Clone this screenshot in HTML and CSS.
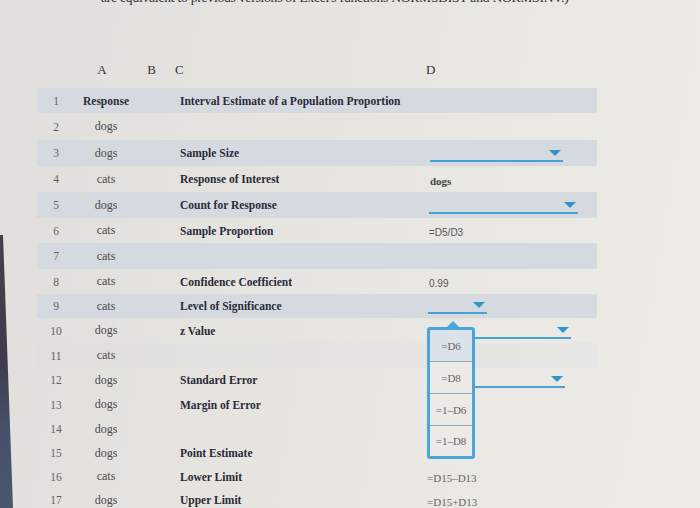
FILE: index.html
```html
<!DOCTYPE html>
<html>
<head>
<meta charset="utf-8">
<link rel="stylesheet" href="styles.css">
</head>
<body>
<div class="page">
  <div class="note">are equivalent to previous versions of Excel's functions NORMSDIST and NORMSINV.)</div>
  <div class="colheads">
    <span></span><span class="ch-a">A</span><span class="ch-b">B</span><span class="ch-c">C</span><span class="ch-d">D</span>
  </div>
  <div class="sheet">
    <div class="row band"><span class="num">1</span><span class="a bold">Response</span><span></span><span class="c">Interval Estimate of a Population Proportion</span><span class="d"></span></div>
    <div class="row"><span class="num">2</span><span class="a">dogs</span><span></span><span class="c"></span><span class="d"></span></div>
    <div class="row band"><span class="num">3</span><span class="a">dogs</span><span></span><span class="c">Sample Size</span><span class="d"><span class="dd w133"></span></span></div>
    <div class="row"><span class="num">4</span><span class="a">cats</span><span></span><span class="c">Response of Interest</span><span class="d"><span class="val bold">dogs</span></span></div>
    <div class="row band"><span class="num">5</span><span class="a">dogs</span><span></span><span class="c">Count for Response</span><span class="d"><span class="dd w149"></span></span></div>
    <div class="row"><span class="num">6</span><span class="a">cats</span><span></span><span class="c">Sample Proportion</span><span class="d"><span class="val sans">=D5/D3</span></span></div>
    <div class="row band"><span class="num">7</span><span class="a">cats</span><span></span><span class="c"></span><span class="d"></span></div>
    <div class="row"><span class="num">8</span><span class="a">cats</span><span></span><span class="c">Confidence Coefficient</span><span class="d"><span class="val sans">0.99</span></span></div>
    <div class="row band"><span class="num">9</span><span class="a">cats</span><span></span><span class="c">Level of Significance</span><span class="d open"><span class="dd w59"></span>
      <div class="list">
        <div class="opt sel">=D6</div>
        <div class="opt">=D8</div>
        <div class="opt">=1–D6</div>
        <div class="opt last">=1–D8</div>
      </div>
    </span></div>
    <div class="row"><span class="num">10</span><span class="a">dogs</span><span></span><span class="c">z Value</span><span class="d"><span class="dd w143"></span></span></div>
    <div class="row faint"><span class="num">11</span><span class="a">cats</span><span></span><span class="c"></span><span class="d"></span></div>
    <div class="row"><span class="num">12</span><span class="a">dogs</span><span></span><span class="c">Standard Error</span><span class="d"><span class="dd w137"></span></span></div>
    <div class="row"><span class="num">13</span><span class="a">dogs</span><span></span><span class="c">Margin of Error</span><span class="d"></span></div>
    <div class="row"><span class="num">14</span><span class="a">dogs</span><span></span><span class="c"></span><span class="d"></span></div>
    <div class="row"><span class="num">15</span><span class="a">dogs</span><span></span><span class="c">Point Estimate</span><span class="d"></span></div>
    <div class="row"><span class="num">16</span><span class="a">cats</span><span></span><span class="c">Lower Limit</span><span class="d"><span class="val formula">=D15–D13</span></span></div>
    <div class="row"><span class="num">17</span><span class="a">dogs</span><span></span><span class="c">Upper Limit</span><span class="d"><span class="val formula">=D15+D13</span></span></div>
  </div>
</div>
<div class="bezel"></div>
</body>
</html>
```

FILE: styles.css
```css
html, body {
  margin: 0;
  padding: 0;
}
body {
  width: 700px;
  height: 508px;
  overflow: hidden;
  position: relative;
  background: linear-gradient(100deg, #e1dfdb 0%, #e7e5e0 45%, #edece6 100%);
  font-family: "Liberation Serif", "DejaVu Serif", serif;
  color: #333;
}
.page {
  padding-left: 37px;
}
.note {
  font-size: 13.5px;
  line-height: 16px;
  height: 16px;
  margin-top: -10px;
  padding-left: 64px;
  color: #2e2e33;
  white-space: nowrap;
  letter-spacing: -0.2px;
}
.colheads {
  margin-top: 56px;
  height: 15px;
  display: grid;
  grid-template-columns: 36px 64px 33px 254px 173px;
  font-size: 13px;
  line-height: 15px;
  color: #333;
}
.ch-a { text-align: center; padding-right: 6px; }
.ch-b { text-align: center; padding-right: 4px; }
.ch-c { padding-left: 5px; }
.ch-d { padding-left: 2px; }

.sheet {
  margin-top: 11px;
  width: 560px;
  display: grid;
  grid-template-rows: 25px 27px 26px 26px 26px 25px 26px 25px 24px 25px 25px 24px 25px 24px 24px 23px 24px;
}
.row {
  display: grid;
  grid-template-columns: 36px 64px 33px 254px 173px;
  align-items: center;
}
.band {
  background: #d5dae1;
}
.faint {
  background: rgba(213, 218, 225, 0.18);
}
.num {
  text-align: center;
  padding-left: 2px;
  font-size: 11.5px;
  color: #626262;
}
.a {
  text-align: center;
  font-size: 12px;
  color: #4a4a4a;
  padding-left: 2px;
}
.bold {
  font-weight: bold;
  color: #2c2d3b;
  font-size: 11.5px;
}
.c {
  padding-left: 10px;
  font-size: 11.5px;
  font-weight: bold;
  color: #2a2b3a;
  white-space: nowrap;
}
.d {
  align-self: stretch;
  display: flex;
  align-items: flex-end;
  padding-left: 4px;
  position: relative;
}
.val {
  font-size: 11px;
  color: #444;
  margin-bottom: 4px;
}
.val.bold {
  font-size: 11px;
  margin-left: 2px;
  margin-bottom: 5px;
}
.sans {
  font-family: "Liberation Sans", Arial, sans-serif;
  font-size: 10px;
  color: #555;
  margin-left: 1px;
  margin-bottom: 5px;
}
.formula {
  font-size: 11px;
  color: #666;
  margin-left: -1px;
}

.dd {
  position: relative;
  height: 2px;
  background: #4aa0d2;
  margin-bottom: 4px;
}
.dd::after {
  content: "";
  position: absolute;
  right: 2px;
  bottom: 6px;
  border-left: 6px solid transparent;
  border-right: 6px solid transparent;
  border-top: 6px solid #2f95cb;
}
.w133 { width: 133px; margin-left: 2px; }
.w149 { width: 149px; margin-left: 1px; }
.w59  { width: 59px; }
.w143 { width: 143px; }
.w137 { width: 137px; }

.list {
  position: absolute;
  z-index: 2;
  left: 3px;
  top: 33px;
  width: 48px;
  height: 132px;
  box-sizing: border-box;
  border: 3px solid #4aa6da;
  border-radius: 3px;
  background: #ebeae6;
  display: flex;
  flex-direction: column;
}
.list::before {
  content: "";
  position: absolute;
  top: -9px;
  left: 16px;
  border-left: 7px solid transparent;
  border-right: 7px solid transparent;
  border-bottom: 7px solid #4aa6da;
}
.opt {
  height: 32px;
  flex: none;
  box-sizing: border-box;
  border-bottom: 1px solid #93a9b8;
  display: flex;
  align-items: center;
  justify-content: center;
  font-size: 11px;
  color: #666;
}
.opt.sel {
  background: #dbe2e9;
}
.opt.last {
  border-bottom: none;
  height: 30px;
}

.bezel {
  position: absolute;
  left: 0;
  top: 0;
  width: 14px;
  height: 508px;
  background: linear-gradient(180deg, #5a4a55 0%, #3f3a4a 70%, #46526a 85%, #4a566c 100%);
  clip-path: polygon(0 235px, 3px 235px, 13px 508px, 0 508px);
}
```
